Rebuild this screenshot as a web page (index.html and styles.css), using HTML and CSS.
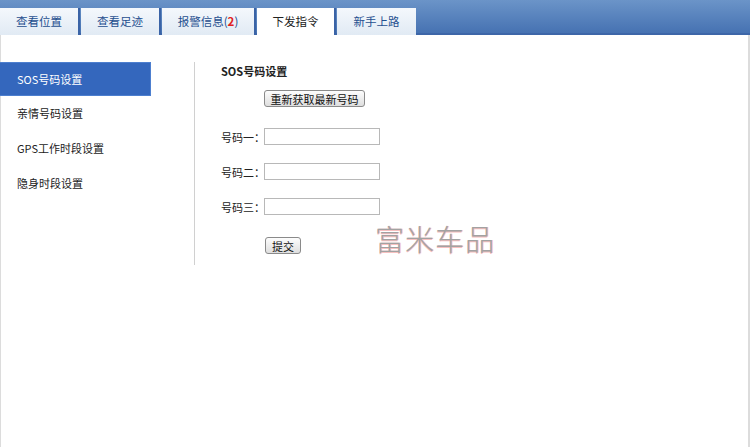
FILE: index.html
```html
<!DOCTYPE html>
<html lang="zh-CN">

<head>
    <meta charset="UTF-8">
    <title>下发指令</title>
    <link rel="stylesheet" href="styles.css">
</head>

<body>
    <div class="topbar">
        <ul class="tabs">
            <li class="tab t1">查看位置</li>
            <li class="tab t2">查看足迹</li>
            <li class="tab t3">报警信息(<span class="count">2</span>)</li>
            <li class="tab t4 active">下发指令</li>
            <li class="tab t5">新手上路</li>
        </ul>
    </div>

    <div class="page">
        <ul class="sidebar">
            <li class="side-item active">SOS号码设置</li>
            <li class="side-item">亲情号码设置</li>
            <li class="side-item">GPS工作时段设置</li>
            <li class="side-item">隐身时段设置</li>
        </ul>

        <div class="content">
            <h3 class="title">SOS号码设置</h3>
            <button class="btn refresh">重新获取最新号码</button>

            <div class="row">
                <label>号码一：</label>
                <input type="text" class="num">
            </div>
            <div class="row">
                <label>号码二：</label>
                <input type="text" class="num">
            </div>
            <div class="row">
                <label>号码三：</label>
                <input type="text" class="num">
            </div>

            <div class="submit-row">
                <button class="btn submit">提交</button>
                <span class="mark">富米车品</span>
            </div>
        </div>
    </div>
</body>

</html>
```

FILE: styles.css
```css
body {
    margin: 0;
    padding: 0;
    font-family: "Noto Sans CJK SC", "DejaVu Sans", sans-serif;
    font-size: 11px;
    color: #222;
    background-color: #fff;
    width: 750px;
    height: 447px;
    overflow: hidden;
    white-space: nowrap;
}

.topbar {
    height: 33px;
    background: linear-gradient(#6b94c8, #4672b2);
    border-bottom: 2px solid #3d66a8;
}

.tabs {
    list-style: none;
    margin: 0;
    padding: 8px 0 0 0;
    display: flex;
    align-items: flex-end;
}

.tab {
    height: 27px;
    line-height: 26px;
    text-align: center;
    font-size: 11.5px;
    color: #1f4f8f;
    background: linear-gradient(#f4f8fc, #e1eaf4);
    border-right: 2px solid #3a63a6;
    margin-right: 1px;
    margin-bottom: -2px;
}

.t1 { width: 78px; }
.t2 { width: 78px; }
.t3 { width: 92px; }
.t4 { width: 77px; }
.t5 { width: 79px; border-right: none; }

.tab.active {
    background: #fff;
    color: #222;
}

.count {
    color: #e02020;
    font-weight: bold;
}

.page {
    display: flex;
    align-items: flex-start;
    height: 412px;
    padding-top: 27px;
    box-sizing: border-box;
    border-left: 1px solid #dcdcdc;
    border-right: 2px solid #dcdcdc;
}

.sidebar {
    list-style: none;
    margin: 0 43px 0 0;
    padding: 0;
    width: 150px;
    flex-shrink: 0;
}

.side-item {
    height: 35px;
    line-height: 34px;
    padding-left: 16px;
    color: #222;
}

.side-item.active {
    background-color: #3467bd;
    border: 1px solid #4d7fcf;
    border-left: none;
    height: 34px;
    line-height: 32px;
    box-sizing: border-box;
    color: #fff;
    margin-left: -1px;
    padding-left: 17px;
}

.content {
    border-left: 1px solid #d0d0d0;
    height: 203px;
    padding-left: 26px;
    width: 400px;
}

.title {
    margin: 0;
    padding-top: 1px;
    font-size: 11px;
    font-weight: bold;
    line-height: 16px;
}

.btn {
    display: block;
    font-family: inherit;
    font-size: 11px;
    color: #111;
    background: linear-gradient(#fdfdfd, #dedede);
    border: 1px solid #8a8a8a;
    border-radius: 3px;
    padding: 0;
    height: 17px;
    line-height: 14px;
    white-space: nowrap;
}

.refresh {
    margin: 11px 0 0 43px;
    width: 101px;
}

.row {
    display: flex;
    align-items: center;
    margin-top: 21px;
    height: 17px;
}

.row + .row {
    margin-top: 18px;
}

.row:last-of-type {
    margin-top: 19px;
}

.row label {
    width: 43px;
    flex-shrink: 0;
}

.num {
    width: 116px;
    height: 17px;
    box-sizing: border-box;
    border: 1px solid #b8b8b8;
    padding: 0 2px;
    flex-shrink: 0;
}

.submit-row {
    display: flex;
    align-items: flex-start;
    margin-top: 22px;
}

.submit {
    margin-left: 44px;
    width: 36px;
}

.mark {
    margin-left: 74px;
    margin-top: -16px;
    font-size: 29px;
    font-weight: 300;
    letter-spacing: 1px;
    color: #a2a2a2;
    text-shadow: 1px 0 0 #f7c0c0, 0 1px 0 #f7c0c0;
    line-height: 34px;
}
```
